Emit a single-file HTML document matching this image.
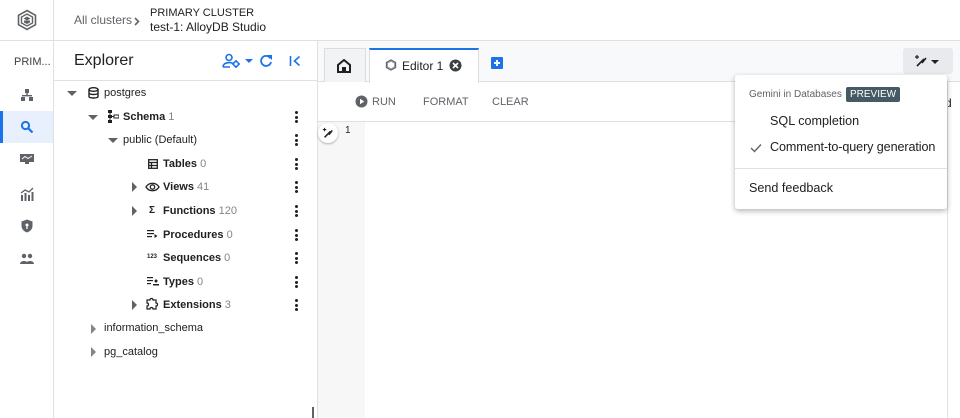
<!DOCTYPE html>
<html><head><style>
*{box-sizing:border-box;margin:0;padding:0}
body{width:960px;height:418px;overflow:hidden;background:#fff;font-family:"Liberation Sans",Arial,sans-serif;color:#202124;position:relative}
.a{position:absolute}
.t{font-size:11px;white-space:nowrap}
.b{font-weight:bold}
.g{color:#80868b;font-weight:normal}
.dots{position:absolute;left:295px;width:3px}
.dots i{display:block;width:3px;height:3px;background:#202124;border-radius:50%;margin-bottom:1.5px}
.tri{position:absolute;width:0;height:0}
.down{border-left:5px solid transparent;border-right:5px solid transparent;border-top:5px solid #5f6368}
.right{border-top:5px solid transparent;border-bottom:5px solid transparent;border-left:5px solid #5f6368}
</style></head><body>
<div class="a" style="left:0;top:0;width:960px;height:41px;border-bottom:1px solid #e0e0e0"></div>
<div class="a" style="left:53px;top:0;width:1px;height:418px;background:#e0e0e0"></div>
<svg class="a" style="left:16px;top:9px" width="22" height="22" viewBox="0 0 22 22"><path d="M11 1.5 L19.5 6.3 V15.7 L11 20.5 L2.5 15.7 V6.3 Z" fill="none" stroke="#5f6368" stroke-width="1.6"/><path d="M11 5 L16.5 8 V14 L11 17 L5.5 14 V8 Z" fill="none" stroke="#5f6368" stroke-width="1.4"/><path d="M7.5 9.5 L11 7.5 L14.5 9.5 L11 11.5 Z M8 11.5 V13.5 L11 15 L14 13.5 V11.5" fill="#5f6368"/></svg>
<div class="a t" style="left:74px;top:13px;font-size:12px;color:#5f6368">All clusters</div>
<svg class="a" style="left:134px;top:17px" width="6" height="9" viewBox="0 0 6 9" fill="none" stroke="#5f6368" stroke-width="1.6"><path d="M1 1 L4.5 4.5 L1 8"/></svg>
<div class="a t" style="left:150px;top:7px;font-size:11px">PRIMARY CLUSTER</div>
<div class="a t" style="left:150px;top:20px;font-size:12px">test-1: AlloyDB Studio</div>
<div class="a t" style="left:14px;top:56px;font-size:11px;color:#3c4043">PRIM...</div>
<svg class="a" style="left:20px;top:88px" width="14" height="14" viewBox="0 0 14 14" fill="#5f6368"><rect x="5" y="1" width="4" height="4"/><rect x="6.3" y="5" width="1.4" height="3"/><rect x="2" y="7" width="10" height="1.4"/><rect x="1" y="9" width="4" height="4"/><rect x="9" y="9" width="4" height="4"/></svg>
<div class="a" style="left:0;top:111px;width:53px;height:32px;background:#e8f0fe"></div>
<div class="a" style="left:0;top:111px;width:3px;height:32px;background:#1a73e8"></div>
<svg class="a" style="left:20px;top:120px" width="14" height="14" viewBox="0 0 14 14"><circle cx="5.5" cy="5.5" r="3.6" fill="none" stroke="#1a73e8" stroke-width="2"/><path d="M8 8 L12.5 12.5" stroke="#1a73e8" stroke-width="2.2"/></svg>
<svg class="a" style="left:20px;top:153px" width="14" height="12" viewBox="0 0 14 12" fill="#5f6368"><rect x="0" y="1" width="14" height="8"/><rect x="5" y="9" width="4" height="2"/><path d="M2 6 L5 3.5 L8 5.5 L12 3" stroke="#fff" stroke-width="1" fill="none"/></svg>
<svg class="a" style="left:20px;top:187px" width="14" height="14" viewBox="0 0 14 14" fill="#5f6368"><rect x="1" y="8" width="2" height="6"/><rect x="4.5" y="6" width="2" height="8"/><rect x="8" y="8" width="2" height="6"/><rect x="11.5" y="5" width="2" height="9"/><path d="M1 6 L5 3 L9 5 L13 1" stroke="#5f6368" stroke-width="1.3" fill="none"/></svg>
<svg class="a" style="left:21px;top:219px" width="12" height="14" viewBox="0 0 12 14"><path d="M6 0.5 L11.5 2.5 V7 C11.5 10 9 12.5 6 13.5 C3 12.5 0.5 10 0.5 7 V2.5 Z" fill="#5f6368"/><circle cx="6" cy="6" r="1.5" fill="#fff"/><rect x="5.4" y="7" width="1.2" height="3" fill="#fff"/></svg>
<svg class="a" style="left:20px;top:253px" width="14" height="12" viewBox="0 0 14 12" fill="#5f6368"><circle cx="4" cy="3" r="2.2"/><circle cx="10" cy="3" r="2.2"/><path d="M0 11 C0 7 8 7 8 11 Z M6 11 C6 7 14 7 14 11 Z"/></svg>
<div class="a" style="left:54px;top:80px;width:264px;height:1px;background:#e0e0e0"></div>
<div class="a" style="left:317px;top:41px;width:1px;height:377px;background:#e0e0e0"></div>
<div class="a t" style="left:74px;top:52px;font-size:16px">Explorer</div>
<svg class="a" style="left:222px;top:53px" width="20" height="16" viewBox="0 0 20 16" fill="none" stroke="#1a73e8" stroke-width="1.6"><circle cx="7" cy="4.5" r="3"/><path d="M1 14 C1 9 9 9 11 10.5 M1 14 H8"/><circle cx="14" cy="11" r="2.4"/><path d="M14 7 V8.5 M14 13.5 V15 M10 11 H11.5 M16.5 11 H18"/></svg>
<div class="tri down a" style="left:245px;top:59px;border-top-color:#1a73e8;border-width:4px 4px 0"></div>
<svg class="a" style="left:259px;top:54px" width="14" height="14" viewBox="0 0 14 14"><path d="M11.5 4.5 A5 5 0 1 0 12 8" fill="none" stroke="#1a73e8" stroke-width="1.8"/><path d="M8 1 L13 1 L13 6 Z" fill="#1a73e8"/></svg>
<svg class="a" style="left:289px;top:55px" width="12" height="12" viewBox="0 0 12 12" stroke="#1a73e8" stroke-width="1.6" fill="none"><path d="M1.5 1 V11 M10.5 1.5 L5.5 6 L10.5 10.5"/></svg>
<div class="tri down a" style="left:67px;top:91px"></div>
<svg class="a" style="left:88px;top:87px" width="11" height="12" viewBox="0 0 11 12" fill="none" stroke="#202124" stroke-width="1.4"><ellipse cx="5.5" cy="2.5" rx="4.5" ry="1.8"/><path d="M1 2.5 V9.5 C1 11.5 10 11.5 10 9.5 V2.5 M1 6 C1 8 10 8 10 6"/></svg>
<div class="a t" style="left:104px;top:87px">postgres</div>
<div class="tri down a" style="left:88px;top:115px"></div>
<svg class="a" style="left:108px;top:110px" width="11" height="13" viewBox="0 0 11 13" fill="#202124"><rect x="0" y="0" width="4" height="3"/><rect x="0" y="5" width="4" height="3"/><rect x="0" y="10" width="4" height="3"/><rect x="6" y="5" width="5" height="3" fill="none" stroke="#202124" stroke-width="1"/><rect x="1.5" y="3" width="1" height="7"/><rect x="4" y="6" width="2" height="1"/></svg>
<div class="a t b" style="left:123px;top:111px">Schema <span class="g">1</span></div>
<div class="dots" style="top:111px"><i></i><i></i><i></i></div>
<div class="tri down a" style="left:108px;top:138px"></div>
<div class="a t" style="left:123px;top:134px">public (Default)</div>
<div class="dots" style="top:134px"><i></i><i></i><i></i></div>
<svg class="a" style="left:148px;top:159px" width="10" height="10" viewBox="0 0 10 10" fill="none" stroke="#202124" stroke-width="1.3"><rect x="0.7" y="0.7" width="8.6" height="8.6"/><path d="M0.7 3.5 H9.3 M0.7 6.5 H9.3 M3.5 3.5 V9.3"/></svg>
<div class="a t b" style="left:163px;top:158px">Tables <span class="g">0</span></div>
<div class="dots" style="top:158px"><i></i><i></i><i></i></div>
<div class="tri right a" style="left:132px;top:182px"></div>
<svg class="a" style="left:145px;top:182px" width="15" height="10" viewBox="0 0 15 10" fill="none" stroke="#202124" stroke-width="1.3"><path d="M1 5 C4 0 11 0 14 5 C11 10 4 10 1 5 Z"/><circle cx="7.5" cy="5" r="2.2"/></svg>
<div class="a t b" style="left:163px;top:181px">Views <span class="g">41</span></div>
<div class="dots" style="top:181px"><i></i><i></i><i></i></div>
<div class="tri right a" style="left:132px;top:206px"></div>
<div class="a t b" style="left:149px;top:205px;font-size:10px">&Sigma;</div>
<div class="a t b" style="left:163px;top:205px">Functions <span class="g">120</span></div>
<div class="dots" style="top:205px"><i></i><i></i><i></i></div>
<svg class="a" style="left:147px;top:230px" width="11" height="8" viewBox="0 0 11 8" fill="#202124"><rect x="0" y="0" width="7" height="1.2"/><rect x="0" y="3" width="7" height="1.2"/><rect x="0" y="6" width="5" height="1.2"/><path d="M7.5 4 L10.5 6 L7.5 8 Z"/></svg>
<div class="a t b" style="left:163px;top:229px">Procedures <span class="g">0</span></div>
<div class="dots" style="top:229px"><i></i><i></i><i></i></div>
<div class="a t" style="left:147px;top:254px;font-size:6px;font-weight:bold">123</div>
<div class="a t b" style="left:163px;top:252px">Sequences <span class="g">0</span></div>
<div class="dots" style="top:252px"><i></i><i></i><i></i></div>
<svg class="a" style="left:147px;top:277px" width="12" height="9" viewBox="0 0 12 9" fill="#202124"><rect x="0" y="0" width="6" height="1.2"/><rect x="0" y="3" width="6" height="1.2"/><rect x="0" y="6" width="4" height="1.2"/><circle cx="9" cy="4" r="1.5"/><rect x="6" y="7" width="6" height="1.5"/></svg>
<div class="a t b" style="left:163px;top:276px">Types <span class="g">0</span></div>
<div class="dots" style="top:276px"><i></i><i></i><i></i></div>
<div class="tri right a" style="left:132px;top:300px"></div>
<svg class="a" style="left:145px;top:297px" width="14" height="14" viewBox="0 0 14 14" fill="none" stroke="#202124" stroke-width="1.2"><path d="M2 3 H5 C5 1 8 1 8 3 H11 V6 C13 6 13 9 11 9 V12 H8 C8 10 5 10 5 12 H2 V9 C4 9 4 6 2 6 Z"/></svg>
<div class="a t b" style="left:163px;top:299px">Extensions <span class="g">3</span></div>
<div class="dots" style="top:299px"><i></i><i></i><i></i></div>
<div class="tri right a" style="left:91px;top:324px;border-left-color:#80868b"></div>
<div class="a t" style="left:104px;top:322px">information_schema</div>
<div class="tri right a" style="left:91px;top:347px;border-left-color:#80868b"></div>
<div class="a t" style="left:104px;top:346px">pg_catalog</div>
<div class="a" style="left:312px;top:407px;width:2px;height:11px;background:#5f6368"></div>
<div class="a" style="left:318px;top:41px;width:642px;height:41px;background:#f8f9fa;border-bottom:1px solid #e0e0e0"></div>
<div class="a" style="left:324px;top:48px;width:42px;height:34px;background:#f1f3f4;border:1px solid #dadce0;border-bottom:none"></div>
<svg class="a" style="left:337px;top:59px" width="14" height="14" viewBox="0 0 14 14"><path d="M7 1 L13 6 V13 H1 V6 Z" fill="none" stroke="#202124" stroke-width="2"/><rect x="5" y="8" width="4" height="5" fill="#202124"/></svg>
<div class="a" style="left:369px;top:48px;width:110px;height:35px;background:#fff;border:1px solid #dadce0;border-top:2px solid #1a73e8;border-bottom:none"></div>
<svg class="a" style="left:385px;top:59px" width="12" height="12" viewBox="0 0 22 22"><path d="M11 1.5 L19.5 6.3 V15.7 L11 20.5 L2.5 15.7 V6.3 Z" fill="#9aa0a6" stroke="#5f6368" stroke-width="2"/><path d="M11 5 L16.5 8 V14 L11 17 L5.5 14 V8 Z" fill="#fff"/></svg>
<div class="a t" style="left:402px;top:59px;font-size:12px">Editor 1</div>
<svg class="a" style="left:449px;top:59px" width="13" height="13" viewBox="0 0 13 13"><circle cx="6.5" cy="6.5" r="6" fill="#3c4043"/><path d="M4 4 L9 9 M9 4 L4 9" stroke="#fff" stroke-width="1.6"/></svg>
<div class="a" style="left:491px;top:57px;width:12px;height:12px;background:#1a73e8;border-radius:1px"></div>
<div class="a" style="left:494px;top:62px;width:6px;height:2px;background:#fff"></div>
<div class="a" style="left:496px;top:60px;width:2px;height:6px;background:#fff"></div>
<div class="a" style="left:903px;top:48px;width:50px;height:26px;background:#e8eaed;border-radius:3px"></div>
<svg class="a" style="left:914px;top:54px" width="14" height="14" viewBox="0 0 14 14" stroke="#202124" stroke-width="1.6" fill="none"><path d="M3 12 L10 5 M8 9 L12 4"/><path d="M3 1 V5 M1 3 H5" stroke-width="1.2"/></svg>
<div class="tri down a" style="left:931px;top:60px;border-top-color:#202124;border-width:4px 4px 0"></div>
<div class="a" style="left:318px;top:121px;width:630px;height:1px;background:#e0e0e0"></div>
<svg class="a" style="left:355px;top:95px" width="13" height="13" viewBox="0 0 13 13"><circle cx="6.5" cy="6.5" r="6" fill="#5f6368"/><path d="M5 3.8 L9.2 6.5 L5 9.2 Z" fill="#fff"/></svg>
<div class="a t" style="left:372px;top:96px;color:#5f6368">RUN</div>
<div class="a t" style="left:423px;top:96px;color:#5f6368">FORMAT</div>
<div class="a t" style="left:492px;top:96px;color:#5f6368">CLEAR</div>
<div class="a t" style="left:945px;top:96px;font-size:12px">d</div>
<div class="a" style="left:318px;top:122px;width:47px;height:296px;background:#f7f7f7"></div>
<div class="a" style="left:947px;top:82px;width:1px;height:336px;background:#e0e0e0"></div>
<div class="a" style="left:318px;top:123px;width:20px;height:20px;border-radius:50%;background:#fff;box-shadow:0 1px 2px rgba(0,0,0,.3)"></div>
<svg class="a" style="left:322px;top:127px" width="12" height="12" viewBox="0 0 14 14" stroke="#202124" stroke-width="1.8" fill="none"><path d="M3 12 L10 5 M8 9 L12 4"/><path d="M3 1 V5 M1 3 H5" stroke-width="1.2"/></svg>
<div class="a t" style="left:345px;top:125px;font-size:10px">1</div>
<div class="a" style="left:735px;top:75px;width:212px;height:134px;background:#fff;border-radius:3px;box-shadow:0 2px 6px rgba(0,0,0,.3)"></div>
<div class="a t" style="left:749px;top:89px;font-size:10px;color:#5f6368">Gemini in Databases</div>
<div class="a t" style="left:846px;top:87px;padding:2px 4px;font-size:10px;background:#455a64;color:#fff;border-radius:2px">PREVIEW</div>
<div class="a t" style="left:770px;top:114px;font-size:12.6px">SQL completion</div>
<svg class="a" style="left:750px;top:143px" width="12" height="10" viewBox="0 0 12 10" fill="none" stroke="#5f6368" stroke-width="1.4"><path d="M1 5 L4.5 8.5 L11 1.5"/></svg>
<div class="a t" style="left:770px;top:140px;font-size:12.6px;letter-spacing:-0.1px">Comment-to-query generation</div>
<div class="a" style="left:735px;top:168px;width:212px;height:1px;background:#e0e0e0"></div>
<div class="a t" style="left:749px;top:181px;font-size:12.6px">Send feedback</div>
</body></html>
